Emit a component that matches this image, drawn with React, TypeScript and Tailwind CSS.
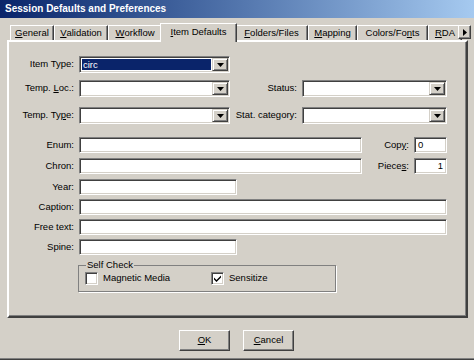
import React from "react";

const sunken =
  "border border-t-[#808080] border-l-[#808080] border-b-white border-r-white shadow-[inset_1px_1px_0_#404040,inset_-1px_-1px_0_#d4d0c8] bg-white";
const raised =
  "border border-t-white border-l-white border-b-[#404040] border-r-[#404040] shadow-[inset_-1px_-1px_0_#808080] bg-[#d4d0c8]";

const U = ({ children }: { children: React.ReactNode }) => <span className="underline underline-offset-1">{children}</span>;

const Combo = ({ w, value }: { w: string; value?: string }) => (
  <div className={`${sunken} ${w} h-[17px] flex p-[1px]`}>
    <div className="flex-1 flex p-[1px]">
      {value && <div className="flex-1 bg-[#0a246a] text-white leading-[11px] pl-[1px]">{value}</div>}
    </div>
    <div className="w-[16px] h-full border border-t-[#d4d0c8] border-l-[#d4d0c8] border-b-[#404040] border-r-[#404040] shadow-[inset_1px_1px_0_#fff,inset_-1px_-1px_0_#808080] bg-[#d4d0c8] flex items-center justify-center">
      <svg width="7" height="4" viewBox="0 0 7 4"><path d="M0 0h7L3.5 4z" fill="#000" /></svg>
    </div>
  </div>
);

const Field = ({ w, value, right }: { w: string; value?: string; right?: boolean }) => (
  <div className={`${sunken} ${w} h-[16px] px-[3px] leading-[14px] ${right ? "text-right" : ""}`}>{value}</div>
);

const Label = ({ w, children }: { w: string; children: React.ReactNode }) => (
  <div className={`${w} text-right pr-[5px] whitespace-nowrap`}>{children}</div>
);

const tabs: { label: React.ReactNode; w: string; sel?: boolean }[] = [
  { label: <><U>G</U>eneral</>, w: "w-[44px]" },
  { label: <><U>V</U>alidation</>, w: "w-[54px]" },
  { label: <><U>W</U>orkflow</>, w: "w-[54px]" },
  { label: <><U>I</U>tem Defaults</>, w: "w-[77px]", sel: true },
  { label: <><U>F</U>olders/Files</>, w: "w-[73px]" },
  { label: <><U>M</U>apping</>, w: "w-[49px]" },
  { label: <>Colors/Fo<U>n</U>ts</>, w: "w-[71px]" },
  { label: <><U>R</U>DA</>, w: "w-[34px]" },
];

export default function App() {
  return (
    <div
      className="w-[474px] h-[360px] bg-[#d4d0c8] overflow-hidden text-black text-[9.5px] flex flex-col shadow-[inset_0_-1px_0_#404040,inset_0_-2px_0_#808080]"
      style={{ fontFamily: '"Liberation Sans", Arial, sans-serif' }}
    >
      <div className="h-[18px] shrink-0 bg-gradient-to-r from-[#0a246a] to-[#a6caf0] text-white font-bold text-[10px] leading-[18px] pl-[5px]">
        Session Defaults and Preferences
      </div>

      <div className="flex items-end h-[22px] pl-[10px] shrink-0">
        {tabs.map((t, i) => (
          <div
            key={i}
            className={`${t.w} shrink-0 flex items-center justify-center border-t border-l border-t-white border-l-white border-r border-r-[#404040] shadow-[inset_-1px_0_0_#808080] whitespace-nowrap ${
              t.sel ? "h-[19px] -mx-[2px] -mb-[2px] relative z-10 bg-[#d4d0c8] pb-[2px]" : "h-[15px]"
            }`}
          >
            {t.label}
          </div>
        ))}
        <div className={`${raised} w-[13px] h-[14px] mb-[1px] ml-[-4px] relative z-10 flex items-center justify-center shrink-0`}>
          <svg width="4" height="7" viewBox="0 0 4 7"><path d="M0 0v7l4-3.5z" fill="#000" /></svg>
        </div>
      </div>

      <div className="ml-[7px] w-[461px] h-[278px] shrink-0 border-2 border-t-white border-l-white border-b-[#404040] border-r-[#404040] shadow-[inset_-1px_-1px_0_#808080] flex flex-col">
        <div className="flex items-center mt-[14px]">
          <Label w="w-[70px]">Item Type:</Label>
          <Combo w="w-[151px]" value="circ" />
        </div>
        <div className="flex items-center mt-[7px]">
          <Label w="w-[70px]">Temp. <U>L</U>oc.:</Label>
          <Combo w="w-[151px]" />
          <Label w="w-[72px]">Status:</Label>
          <Combo w="w-[145px]" />
        </div>
        <div className="flex items-center mt-[10px]">
          <Label w="w-[70px]">Temp. Ty<U>p</U>e:</Label>
          <Combo w="w-[151px]" />
          <Label w="w-[72px]">Stat. category:</Label>
          <Combo w="w-[145px]" />
        </div>
        <div className="flex items-center mt-[13px]">
          <Label w="w-[70px]">Enum:</Label>
          <Field w="w-[283px]" />
          <Label w="w-[52px]">Cop<U>y</U>:</Label>
          <Field w="w-[33px]" value="0" />
        </div>
        <div className="flex items-center mt-[5px]">
          <Label w="w-[70px]">Chron:</Label>
          <Field w="w-[283px]" />
          <Label w="w-[52px]">Piece<U>s</U>:</Label>
          <Field w="w-[33px]" value="1" right />
        </div>
        <div className="flex items-center mt-[5px]">
          <Label w="w-[70px]">Year:</Label>
          <Field w="w-[158px]" />
        </div>
        <div className="flex items-center mt-[4px]">
          <Label w="w-[70px]">Caption:</Label>
          <Field w="w-[368px]" />
        </div>
        <div className="flex items-center mt-[4px]">
          <Label w="w-[70px]">Free text:</Label>
          <Field w="w-[368px]" />
        </div>
        <div className="flex items-center mt-[4px]">
          <Label w="w-[70px]">Spine:</Label>
          <Field w="w-[158px]" />
        </div>
        <fieldset className="ml-[69px] mt-[4px] w-[258px] h-[33px] border border-[#808080] shadow-[1px_1px_0_#fff] px-[6px] flex items-center">
          <legend className="px-[1px] ml-[1px] leading-[12px]">Self Check</legend>
          <div className="flex items-center w-[126px]">
            <div className={`${sunken} w-[13px] h-[13px]`} />
            <span className="ml-[5px]">Magnetic Media</span>
          </div>
          <div className="flex items-center">
            <div className={`${sunken} w-[13px] h-[13px] flex items-center justify-center`}>
              <svg width="7" height="7" viewBox="0 0 7 7"><path d="M0 2.5l2.5 2.5L7 0.5v2L2.5 7 0 4.5z" fill="#000" /></svg>
            </div>
            <span className="ml-[5px]">Sensitize</span>
          </div>
        </fieldset>
      </div>

      <div className="flex justify-center gap-[13px] mt-[12px] pr-[1px]">
        <button className={`${raised} w-[51px] h-[21px]`}><U>O</U>K</button>
        <button className={`${raised} w-[51px] h-[21px]`}><U>C</U>ancel</button>
      </div>
    </div>
  );
}
